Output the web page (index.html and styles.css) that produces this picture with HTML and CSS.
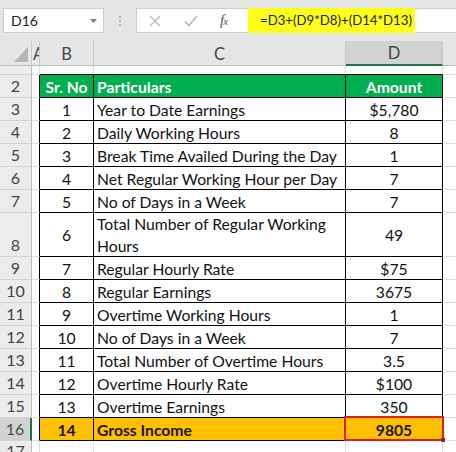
FILE: index.html
```html
<!DOCTYPE html>
<html>
<head>
<meta charset="utf-8">
<link rel="stylesheet" href="styles.css">
</head>
<body>
<div class="toolbar">
  <div class="namebox"><span>D16</span><svg class="dd" width="7" height="4" viewBox="0 0 7 4"><path d="M0 0H7L3.5 4Z" fill="#7a7a7a"/></svg></div>
  <div class="grip"><i></i><i></i><i></i></div>
  <div class="fbar">
    <div class="fbtns">
      <svg class="ico x" width="12" height="12" viewBox="0 0 12 12"><path d="M1 1L11 11M11 1L1 11" stroke="#b9b9b9" stroke-width="1.3" fill="none"/></svg>
      <svg class="ico ok" width="14" height="12" viewBox="0 0 14 12"><path d="M1 6.5L5 10.5L13 1" stroke="#b9b9b9" stroke-width="1.6" fill="none"/></svg>
      <span class="fx"><i>f</i><span>x</span></span>
    </div>
    <div class="formula">=D3+(D9*D8)+(D14*D13)</div>
  </div>
</div>

<div class="sheet">
  <div class="ch corner"><svg width="14" height="15" viewBox="0 0 14 15"><path d="M14 0V15H0Z" fill="#b5b5b5"/></svg></div>
  <div class="ch clip">A</div>
  <div class="ch">B</div>
  <div class="ch">C</div>
  <div class="ch on">D</div>
  <div class="ch last"></div>

  <div class="rh"></div>
  <div class="g"></div>
  <div class="g top"></div>
  <div class="g top"></div>
  <div class="g top"></div>
  <div class="g e"></div>

  <div class="rh">2</div>
  <div class="g lft"></div>
  <div class="t hd ctr">Sr. No</div>
  <div class="t hd txt">Particulars</div>
  <div class="t hd ctr">Amount</div>
  <div class="g e"></div>

  <div class="rh">3</div><div class="g lft"></div>
  <div class="t ctr">1</div><div class="t txt">Year to Date Earnings</div><div class="t ctr">$5,780</div>
  <div class="g e"></div>

  <div class="rh">4</div><div class="g lft"></div>
  <div class="t ctr">2</div><div class="t txt">Daily Working Hours</div><div class="t ctr">8</div>
  <div class="g e"></div>

  <div class="rh">5</div><div class="g lft"></div>
  <div class="t ctr">3</div><div class="t txt">Break Time Availed During the Day</div><div class="t ctr">1</div>
  <div class="g e"></div>

  <div class="rh">6</div><div class="g lft"></div>
  <div class="t ctr">4</div><div class="t txt">Net Regular Working Hour per Day</div><div class="t ctr">7</div>
  <div class="g e"></div>

  <div class="rh">7</div><div class="g lft"></div>
  <div class="t ctr">5</div><div class="t txt">No of Days in a Week</div><div class="t ctr">7</div>
  <div class="g e"></div>

  <div class="rh">8</div><div class="g lft"></div>
  <div class="t ctr">6</div><div class="t txt wrap">Total Number of Regular Working Hours</div><div class="t ctr">49</div>
  <div class="g e"></div>

  <div class="rh">9</div><div class="g lft"></div>
  <div class="t ctr">7</div><div class="t txt">Regular Hourly Rate</div><div class="t ctr">$75</div>
  <div class="g e"></div>

  <div class="rh">10</div><div class="g lft"></div>
  <div class="t ctr">8</div><div class="t txt">Regular Earnings</div><div class="t ctr">3675</div>
  <div class="g e"></div>

  <div class="rh">11</div><div class="g lft"></div>
  <div class="t ctr">9</div><div class="t txt">Overtime Working Hours</div><div class="t ctr">1</div>
  <div class="g e"></div>

  <div class="rh">12</div><div class="g lft"></div>
  <div class="t ctr">10</div><div class="t txt">No of Days in a Week</div><div class="t ctr">7</div>
  <div class="g e"></div>

  <div class="rh">13</div><div class="g lft"></div>
  <div class="t ctr">11</div><div class="t txt">Total Number of Overtime Hours</div><div class="t ctr">3.5</div>
  <div class="g e"></div>

  <div class="rh">14</div><div class="g lft"></div>
  <div class="t ctr">12</div><div class="t txt">Overtime Hourly Rate</div><div class="t ctr">$100</div>
  <div class="g e"></div>

  <div class="rh">15</div><div class="g lft"></div>
  <div class="t ctr">13</div><div class="t txt">Overtime Earnings</div><div class="t ctr">350</div>
  <div class="g e"></div>

  <div class="rh on">16</div><div class="g lft"></div>
  <div class="t gross ctr">14</div><div class="t gross txt">Gross Income</div><div class="t gross ctr sel">9805</div>
  <div class="g e"></div>

  <div class="rh">17</div>
  <div class="g"></div>
  <div class="g"></div>
  <div class="g"></div>
  <div class="g"></div>
  <div class="g e"></div>
</div>
</body>
</html>
```

FILE: styles.css
```css
* {
  box-sizing: border-box;
  margin: 0;
  padding: 0;
}

html,
body {
  width: 456px;
  height: 452px;
  overflow: hidden;
  background: #fff;
}

body {
  font-family: Lato, Carlito, "Liberation Sans", sans-serif;
  color: #111;
  display: flex;
  flex-direction: column;
}

.toolbar {
  height: 41px;
  flex: none;
  background: #e6e6e6;
  display: flex;
  align-items: center;
  padding-left: 3px;
}

.namebox {
  width: 101px;
  height: 25px;
  background: #fff;
  border: 1px solid #cdcdcd;
  display: flex;
  align-items: center;
  justify-content: space-between;
  padding: 0 6px 0 7px;
  font-size: 14px;
  color: #222;
}

.grip {
  width: 32px;
  display: flex;
  flex-direction: column;
  align-items: center;
  gap: 2px;
}

.grip i {
  width: 2px;
  height: 2px;
  background: #b3b3b3;
}

.fbar {
  flex: 1;
  height: 25px;
  background: #fff;
  border: 1px solid #cdcdcd;
  border-right: none;
  display: flex;
  align-items: stretch;
}

.fbtns {
  width: 109px;
  display: flex;
  align-items: center;
  padding-left: 12px;
}

.ico.ok {
  margin-left: 23px;
}

.fx {
  margin-left: 22px;
  font-family: "Liberation Serif", serif;
  font-style: italic;
  font-size: 15px;
  color: #555;
  letter-spacing: -1px;
}

.fx span {
  font-size: 11px;
}

.formula {
  margin: -1px 0 -1px 2px;
  width: 167px;
  background: #ffff1a;
  padding-left: 12px;
  font-size: 13.2px;
  line-height: 25px;
  color: #222;
  white-space: nowrap;
}

.sheet {
  flex: 1;
  display: grid;
  grid-template-columns: 32px 8px 54px 252px 97px 1fr;
  grid-template-rows: 25px 9px repeat(6, 23px) 44px repeat(8, 23px) 1fr;
  font-size: 15.7px;
}

.ch {
  background: #e6e6e6;
  border-right: 1px solid #c9c9c9;
  border-bottom: 1px solid #bdbdbd;
  display: flex;
  align-items: center;
  justify-content: center;
  font-size: 16.5px;
  color: #444;
  padding-top: 1px;
}

.ch.corner {
  justify-content: flex-end;
  align-items: flex-end;
  padding: 0 3px 3px 0;
}

.ch.clip {
  overflow: hidden;
  justify-content: flex-start;
  padding-left: 1px;
}

.ch.on {
  background: #d2d2d2;
  border-bottom: 2px solid #217346;
  color: #3d4b42;
}

.ch.last {
  border-right: none;
}

.rh {
  background: #ececec;
  border-right: 1px solid #bdbdbd;
  border-bottom: 1px solid #d4d4d4;
  display: flex;
  align-items: flex-end;
  justify-content: center;
  padding-bottom: 2px;
  color: #444;
  font-size: 16px;
  line-height: 19px;
  overflow: hidden;
}

.rh.on {
  background: #d2d2d2;
  border-right: 2px solid #217346;
  color: #2f5b40;
}

.g {
  border-right: 1px solid #dedede;
  border-bottom: 1px solid #dedede;
}

.g.top {
  border-bottom-color: #000;
}

.g.lft {
  border-right-color: #000;
}

.g.e {
  border-right: none;
}

.t {
  border-right: 1px solid #000;
  border-bottom: 1px solid #000;
  display: flex;
  align-items: center;
  line-height: 22px;
  padding-top: 1px;
  color: #111;
  white-space: nowrap;
}

.ctr {
  justify-content: center;
}

.txt {
  padding-left: 3px;
}

.wrap {
  white-space: normal;
  line-height: 22px;
}

.hd {
  background: #00b050;
  color: #fff;
  font-weight: 700;
}

.gross {
  background: #ffc000;
  font-weight: 700;
  color: #1a1400;
}

.sel {
  position: relative;
}

.sel::before {
  content: "";
  position: absolute;
  left: -2px;
  top: -2px;
  right: -2px;
  bottom: -1px;
  border: 2.5px solid #e01e1e;
}

.sel::after {
  content: "";
  position: absolute;
  right: -3px;
  bottom: -2px;
  width: 4px;
  height: 4px;
  background: #7a2b2b;
}
```
